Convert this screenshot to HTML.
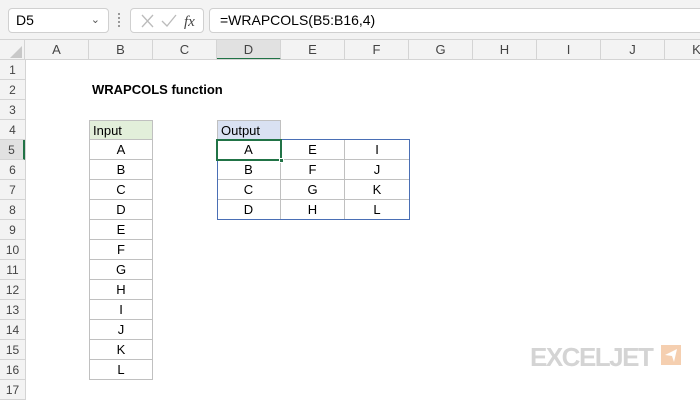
<!DOCTYPE html>
<html><head><style>
body{margin:0;width:700px;height:400px;overflow:hidden;background:#fff;font-family:"Liberation Sans",Arial,sans-serif;position:relative}
.a{position:absolute;box-sizing:border-box}
.ch{position:absolute;top:40px;height:20px;font-size:13px;color:#444;text-align:center;line-height:20px;border-right:1px solid #d4d4d4;background:#f3f3f3;box-sizing:border-box}
.rh{position:absolute;left:0;width:25px;height:20px;font-size:12px;color:#444;text-align:center;line-height:20px;border-bottom:1px solid #d4d4d4;background:#f3f3f3;box-sizing:border-box}
.c{position:absolute;height:20px;width:64px;font-size:13px;text-align:center;line-height:20px;box-sizing:border-box;border:1px solid #c0c0c0}
</style></head><body>
<div class="a" style="left:0;top:0;width:700px;height:40px;background:#f3f3f3;border-bottom:1px solid #d4d4d4"></div>
<div class="a" style="left:8px;top:8px;width:101px;height:25px;background:#fff;border:1px solid #d0d0d0;border-radius:4px;font-size:14px;line-height:23px;padding-left:7px">D5<span style="position:absolute;right:8px;top:0;font-size:11px;color:#555">&#8964;</span></div>
<div class="a" style="left:118px;top:13px;width:2px;height:14px;border-left:2px dotted #999"></div>
<div class="a" style="left:130px;top:8px;width:74px;height:25px;background:#fff;border:1px solid #d0d0d0;border-radius:4px"></div>
<svg class="a" style="left:138px;top:13px" width="60" height="16"><path d="M4 2l11 12M15 2L4 14" stroke="#bbb" stroke-width="1.3"/><path d="M24 8l5 5 9-11" stroke="#bbb" stroke-width="1.3" fill="none"/><text x="46" y="13" font-family="Liberation Serif" font-style="italic" font-size="15" fill="#444">fx</text></svg>
<div class="a" style="left:209px;top:8px;width:495px;height:25px;background:#fff;border:1px solid #d0d0d0;border-radius:4px;font-size:14px;line-height:23px;padding-left:10px">=WRAPCOLS(B5:B16,4)</div>
<div class="a" style="left:0;top:40px;width:25px;height:20px;background:#f3f3f3;border-right:1px solid #d4d4d4;border-bottom:1px solid #d4d4d4"></div>
<svg class="a" style="left:10px;top:46px" width="12" height="12"><path d="M12 0V12H0Z" fill="#c8c8c8"/></svg>
<div class="ch" style="left:25px;width:64px">A</div>
<div class="ch" style="left:89px;width:64px">B</div>
<div class="ch" style="left:153px;width:64px">C</div>
<div class="ch" style="left:217px;width:64px;background:#e1e1e1;border-bottom:2px solid #217346">D</div>
<div class="ch" style="left:281px;width:64px">E</div>
<div class="ch" style="left:345px;width:64px">F</div>
<div class="ch" style="left:409px;width:64px">G</div>
<div class="ch" style="left:473px;width:64px">H</div>
<div class="ch" style="left:537px;width:64px">I</div>
<div class="ch" style="left:601px;width:64px">J</div>
<div class="ch" style="left:665px;width:64px">K</div>
<div class="a" style="left:0;top:59px;width:700px;height:1px;background:#d4d4d4"></div>
<div class="a" style="left:25px;top:60px;width:1px;height:340px;background:#d4d4d4"></div>
<div class="rh" style="top:60px">1</div><div class="rh" style="top:80px">2</div><div class="rh" style="top:100px">3</div><div class="rh" style="top:120px">4</div>
<div class="rh" style="top:140px;background:#e1e1e1;border-right:2px solid #217346">5</div>
<div class="rh" style="top:160px">6</div><div class="rh" style="top:180px">7</div><div class="rh" style="top:200px">8</div><div class="rh" style="top:220px">9</div><div class="rh" style="top:240px">10</div><div class="rh" style="top:260px">11</div><div class="rh" style="top:280px">12</div><div class="rh" style="top:300px">13</div><div class="rh" style="top:320px">14</div><div class="rh" style="top:340px">15</div><div class="rh" style="top:360px">16</div><div class="rh" style="top:380px">17</div>
<div class="a" style="left:92px;top:80px;font-size:13px;font-weight:bold;line-height:20px">WRAPCOLS function</div>
<div class="c" style="left:89px;top:120px;background:#e2efda;text-align:left;padding-left:3px">Input</div>
<div class="c" style="left:89px;top:139px;height:21px">A</div>
<div class="c" style="left:89px;top:159px;height:21px">B</div>
<div class="c" style="left:89px;top:179px;height:21px">C</div>
<div class="c" style="left:89px;top:199px;height:21px">D</div>
<div class="c" style="left:89px;top:219px;height:21px">E</div>
<div class="c" style="left:89px;top:239px;height:21px">F</div>
<div class="c" style="left:89px;top:259px;height:21px">G</div>
<div class="c" style="left:89px;top:279px;height:21px">H</div>
<div class="c" style="left:89px;top:299px;height:21px">I</div>
<div class="c" style="left:89px;top:319px;height:21px">J</div>
<div class="c" style="left:89px;top:339px;height:21px">K</div>
<div class="c" style="left:89px;top:359px;height:21px">L</div>
<div class="c" style="left:217px;top:120px;background:#d9e1f2;text-align:left;padding-left:3px">Output</div>
<div class="c" style="left:217px;top:140px;border:none;border-right:1px solid #c0c0c0;border-bottom:1px solid #c0c0c0">A</div>
<div class="c" style="left:217px;top:160px;border:none;border-right:1px solid #c0c0c0;border-bottom:1px solid #c0c0c0">B</div>
<div class="c" style="left:217px;top:180px;border:none;border-right:1px solid #c0c0c0;border-bottom:1px solid #c0c0c0">C</div>
<div class="c" style="left:217px;top:200px;border:none;border-right:1px solid #c0c0c0">D</div>
<div class="c" style="left:281px;top:140px;border:none;border-right:1px solid #c0c0c0;border-bottom:1px solid #c0c0c0">E</div>
<div class="c" style="left:281px;top:160px;border:none;border-right:1px solid #c0c0c0;border-bottom:1px solid #c0c0c0">F</div>
<div class="c" style="left:281px;top:180px;border:none;border-right:1px solid #c0c0c0;border-bottom:1px solid #c0c0c0">G</div>
<div class="c" style="left:281px;top:200px;border:none;border-right:1px solid #c0c0c0">H</div>
<div class="c" style="left:345px;top:140px;border:none;border-bottom:1px solid #c0c0c0">I</div>
<div class="c" style="left:345px;top:160px;border:none;border-bottom:1px solid #c0c0c0">J</div>
<div class="c" style="left:345px;top:180px;border:none;border-bottom:1px solid #c0c0c0">K</div>
<div class="c" style="left:345px;top:200px;border:none">L</div>
<div class="a" style="left:217px;top:139px;width:193px;height:81px;border:1px solid #4a6fb5"></div>
<div class="a" style="left:216px;top:139px;width:66px;height:22px;border:2px solid #217346"></div>
<div class="a" style="left:279px;top:158px;width:5px;height:5px;background:#217346;border:1px solid #fff"></div>
<div class="a" style="left:530px;top:342px;font-size:26px;font-weight:bold;color:#d4d4d4;letter-spacing:-1.5px;line-height:30px">EXCELJET</div>
<svg class="a" style="left:661px;top:345px" width="20" height="20"><rect width="20" height="20" fill="#f5cfb0"/><path d="M4 10L16 4 13 17 11 11Z" fill="#fff"/></svg>
</body></html>
